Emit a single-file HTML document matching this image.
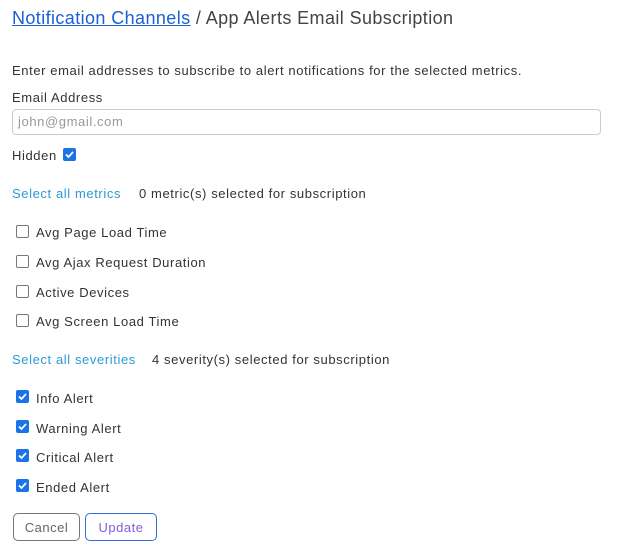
<!DOCTYPE html>
<html><head><style>
body{margin:0;width:642px;height:551px;background:#fff;font-family:"Liberation Sans",sans-serif;color:#333;position:relative;overflow:hidden}
.a{position:absolute;white-space:nowrap;font-size:13px;letter-spacing:0.6px;line-height:16px}
.cb{position:absolute;width:11px;height:11px;border:1px solid #777;border-radius:2px;background:#fff}
.ck{position:absolute;width:13px;height:13px;border-radius:2px;background:#1a73e8}
.ck svg{position:absolute;left:1px;top:1px}
.btn{position:absolute;height:28px;border-radius:5px;font-size:13px;letter-spacing:0.5px;line-height:28px;text-align:center;box-sizing:border-box}
</style></head><body>
<div class="a" style="left:12px;top:6px;font-size:18px;letter-spacing:0.4px;line-height:24px;color:#444"><span style="color:#1a5fd6;text-decoration:underline">Notification Channels</span> / App Alerts Email Subscription</div>
<div class="a" style="left:12px;top:63px">Enter email addresses to subscribe to alert notifications for the selected metrics.</div>
<div class="a" style="left:12px;top:90px">Email Address</div>
<div style="position:absolute;left:12px;top:109px;width:589px;height:26px;box-sizing:border-box;border:1px solid #ccc;border-radius:4px"></div>
<div class="a" style="left:18px;top:114px;color:#999">john@gmail.com</div>
<div class="a" style="left:12px;top:148px">Hidden</div>
<div class="ck" style="left:63px;top:148px"><svg width="11" height="11"><path d="M2 5.5l2.5 2.5 4.5-5" stroke="#fff" stroke-width="1.8" fill="none"/></svg></div>
<div class="a" style="left:12px;top:186px;color:#2a9bd8">Select all metrics</div>
<div class="a" style="left:139px;top:186px">0 metric(s) selected for subscription</div>
<div class="cb" style="left:16px;top:225px"></div><div class="a" style="left:36px;top:225px">Avg Page Load Time</div>
<div class="cb" style="left:16px;top:255px"></div><div class="a" style="left:36px;top:255px">Avg Ajax Request Duration</div>
<div class="cb" style="left:16px;top:285px"></div><div class="a" style="left:36px;top:285px">Active Devices</div>
<div class="cb" style="left:16px;top:314px"></div><div class="a" style="left:36px;top:314px">Avg Screen Load Time</div>
<div class="a" style="left:12px;top:352px;color:#2a9bd8">Select all severities</div>
<div class="a" style="left:152px;top:352px">4 severity(s) selected for subscription</div>
<div class="ck" style="left:16px;top:390px"><svg width="11" height="11"><path d="M2 5.5l2.5 2.5 4.5-5" stroke="#fff" stroke-width="1.8" fill="none"/></svg></div><div class="a" style="left:36px;top:391px">Info Alert</div>
<div class="ck" style="left:16px;top:420px"><svg width="11" height="11"><path d="M2 5.5l2.5 2.5 4.5-5" stroke="#fff" stroke-width="1.8" fill="none"/></svg></div><div class="a" style="left:36px;top:421px">Warning Alert</div>
<div class="ck" style="left:16px;top:449px"><svg width="11" height="11"><path d="M2 5.5l2.5 2.5 4.5-5" stroke="#fff" stroke-width="1.8" fill="none"/></svg></div><div class="a" style="left:36px;top:450px">Critical Alert</div>
<div class="ck" style="left:16px;top:479px"><svg width="11" height="11"><path d="M2 5.5l2.5 2.5 4.5-5" stroke="#fff" stroke-width="1.8" fill="none"/></svg></div><div class="a" style="left:36px;top:480px">Ended Alert</div>
<div class="btn" style="left:13px;top:513px;width:67px;border:1px solid #777;color:#666">Cancel</div>
<div class="btn" style="left:85px;top:513px;width:72px;border:1px solid #2f6fe0;color:#7b5fe0">Update</div>
</body></html>
